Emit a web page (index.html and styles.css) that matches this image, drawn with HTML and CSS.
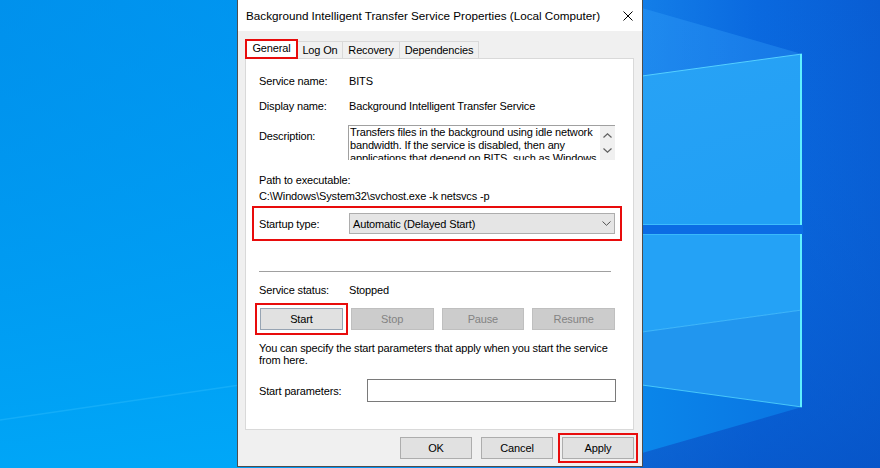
FILE: index.html
```html
<!DOCTYPE html>
<html lang="en">
<head>
<meta charset="utf-8">
<title>BITS Properties</title>
<link rel="stylesheet" href="styles.css">
</head>
<body>
<div class="desktop">
  <svg class="wallpaper" width="880" height="468" viewBox="0 0 880 468">
    <defs>
      <linearGradient id="bg" x1="0" y1="0" x2="1" y2="0">
        <stop offset="0" stop-color="#0093ed"/>
        <stop offset="0.27" stop-color="#009bf3"/>
        <stop offset="0.73" stop-color="#137ee8"/>
        <stop offset="0.86" stop-color="#0a69df"/>
        <stop offset="1" stop-color="#095dd3"/>
      </linearGradient>
      <linearGradient id="lv" x1="0" y1="0" x2="0" y2="1">
        <stop offset="0" stop-color="#008fec" stop-opacity="0.5"/>
        <stop offset="1" stop-color="#00aaf9" stop-opacity="0.8"/>
      </linearGradient>
      <linearGradient id="rv" x1="0" y1="0" x2="0" y2="1">
        <stop offset="0" stop-color="#0a70e4" stop-opacity="0"/>
        <stop offset="1" stop-color="#0650c2" stop-opacity="0.6"/>
      </linearGradient>
      <linearGradient id="pane" x1="0" y1="0" x2="0.3" y2="1">
        <stop offset="0" stop-color="#28a2f5"/>
        <stop offset="1" stop-color="#21a0f5"/>
      </linearGradient>
      <linearGradient id="cone" x1="0" y1="0" x2="1" y2="0">
        <stop offset="0" stop-color="#0a86ea"/>
        <stop offset="1" stop-color="#0a74e2"/>
      </linearGradient>
    </defs>
    <rect width="880" height="468" fill="url(#bg)"/>
    <rect width="240" height="468" fill="url(#lv)"/>
    <rect x="640" width="240" height="468" fill="url(#rv)"/>
    <path d="M0 420 L240 385" stroke="#40c8ff" stroke-opacity="0.3" stroke-width="1.5" fill="none"/>
    <polygon points="642,8 802,54 642,76" fill="#3aa8ff" opacity="0.3"/>
    <polygon points="642,76 802,54 802,225 642,225" fill="url(#pane)"/>
    <rect x="642" y="225" width="161" height="9" fill="#0b6ce4"/>
    <polygon points="642,385 802,407 642,453" fill="url(#cone)"/>
    <polygon points="642,234 802,234 802,310 642,332" fill="#24a2f6"/>
    <polygon points="642,332 802,310 802,407 642,385" fill="#2196ef"/>
    <line x1="642" y1="76" x2="802" y2="54" stroke="#55d0ff" stroke-width="1"/>
    <line x1="642" y1="224.5" x2="802" y2="224.5" stroke="#48c8ff" stroke-width="1" stroke-opacity="0.7"/>
    <line x1="642" y1="234.5" x2="802" y2="234.5" stroke="#48c8ff" stroke-width="1" stroke-opacity="0.6"/>
    <line x1="642" y1="332" x2="802" y2="310" stroke="#50c8ff" stroke-opacity="0.7" stroke-width="1"/>
    <line x1="642" y1="385" x2="802" y2="407" stroke="#55d8ff" stroke-opacity="0.8" stroke-width="1"/>
    <line x1="801" y1="54" x2="801" y2="225" stroke="#5ff0ff" stroke-width="2"/>
    <line x1="801" y1="234" x2="801" y2="407" stroke="#5ff0ff" stroke-width="2"/>
  </svg>

  <div class="dialog">
    <div class="titlebar">
      <span class="title">Background Intelligent Transfer Service Properties (Local Computer)</span>
      <svg class="close" width="10" height="10" viewBox="0 0 10 10"><path d="M0.5 0.5 L9.5 9.5 M9.5 0.5 L0.5 9.5" stroke="#000" stroke-width="1" fill="none"/></svg>
    </div>

    <div class="tabs">
      <div class="tab tab-sel tab-gen mark">General</div>
      <div class="tab tab-log">Log On</div>
      <div class="tab tab-rec">Recovery</div>
      <div class="tab tab-dep">Dependencies</div>
    </div>

    <div class="panel">
      <div class="row r-name"><span class="lbl">Service name:</span><span>BITS</span></div>
      <div class="row r-disp"><span class="lbl">Display name:</span><span>Background Intelligent Transfer Service</span></div>
      <div class="row r-desc">
        <span class="lbl lbl-desc">Description:</span>
        <div class="descbox">
          <div class="desctext">
            <div>Transfers files in the background using idle network</div>
            <div>bandwidth. If the service is disabled, then any</div>
            <div>applications that depend on BITS, such as Windows</div>
          </div>
          <div class="scroll">
            <svg width="9" height="5" viewBox="0 0 9 5"><path d="M0.5 4.5 L4.5 0.8 L8.5 4.5" stroke="#606060" stroke-width="1.2" fill="none"/></svg>
            <svg width="9" height="5" viewBox="0 0 9 5"><path d="M0.5 0.5 L4.5 4.2 L8.5 0.5" stroke="#606060" stroke-width="1.2" fill="none"/></svg>
          </div>
        </div>
      </div>
      <div class="row r-pathlbl">Path to executable:</div>
      <div class="row r-path">C:\Windows\System32\svchost.exe -k netsvcs -p</div>
      <div class="row r-startup mark">
        <span class="lbl">Startup type:</span>
        <div class="combo">
          <span>Automatic (Delayed Start)</span>
          <svg width="9" height="5" viewBox="0 0 9 5"><path d="M0.5 0.5 L4.5 4.3 L8.5 0.5" stroke="#505050" stroke-width="1" fill="none"/></svg>
        </div>
      </div>
      <div class="sep"></div>
      <div class="row r-status"><span class="lbl">Service status:</span><span>Stopped</span></div>
      <div class="row r-btns">
        <div class="btn btn-focus mark-btn">Start</div>
        <div class="btn btn-dis">Stop</div>
        <div class="btn btn-dis">Pause</div>
        <div class="btn btn-dis">Resume</div>
      </div>
      <div class="r-hint">You can specify the start parameters that apply when you start the service<br>from here.</div>
      <div class="row r-params">
        <span class="lbl lbl-params">Start parameters:</span>
        <div class="input"></div>
      </div>
    </div>

    <div class="footer">
      <div class="btn fbtn">OK</div>
      <div class="btn fbtn">Cancel</div>
      <div class="btn fbtn mark-apply">Apply</div>
    </div>
  </div>
</div>
</body>
</html>
```

FILE: styles.css
```css
html, body {
  margin: 0;
  padding: 0;
  width: 880px;
  height: 468px;
  overflow: hidden;
}

body {
  font-family: "Liberation Sans", Arial, sans-serif;
  font-size: 11px;
  letter-spacing: -0.15px;
  color: #000;
}

.desktop {
  position: relative;
  width: 880px;
  height: 468px;
  overflow: hidden;
  background: #0a7fe6;
}

.wallpaper {
  position: absolute;
  left: 0;
  top: 0;
  display: block;
}

.dialog {
  position: absolute;
  left: 237px;
  top: -1px;
  width: 404px;
  height: 466px;
  border: 1px solid #4d4d4d;
  background: #f0f0f0;
  display: flex;
  flex-direction: column;
}

.titlebar {
  height: 31px;
  flex: none;
  background: #fff;
  display: flex;
  align-items: center;
  justify-content: space-between;
  padding: 0 9px 0 8px;
}

.title {
  font-size: 11.7px;
  letter-spacing: 0;
  white-space: nowrap;
}

.close {
  display: block;
}

.tabs {
  display: flex;
  align-items: flex-end;
  height: 20px;
  margin: 8px 0 0 7px;
  position: relative;
  z-index: 2;
}

.tab {
  box-sizing: border-box;
  height: 17px;
  margin-bottom: 1px;
  border: 1px solid #d9d9d9;
  border-bottom: none;
  background: #f0f0f0;
  text-align: center;
  line-height: 16px;
  white-space: nowrap;
}

.tab + .tab {
  margin-left: -1px;
}

.tab-sel {
  height: 20px;
  margin-bottom: 0;
  background: #fff;
  line-height: 17px;
  position: relative;
  z-index: 2;
}

.tab-gen { width: 53px; }
.tab-log { width: 46px; }
.tab-rec { width: 58px; }
.tab-dep { width: 80px; }

.mark {
  outline: 2px solid #e80c0c;
}

.tab-gen.mark {
  outline-offset: -2px;
}

.panel {
  box-sizing: border-box;
  height: 372px;
  margin: -1px 8px 0 7px;
  border: 1px solid #d9d9d9;
  background: #fff;
  padding: 0 17px 0 13px;
  display: flex;
  flex-direction: column;
  position: relative;
  z-index: 1;
}

.row {
  display: flex;
  align-items: flex-start;
  line-height: 14px;
  white-space: nowrap;
}

.lbl {
  width: 90px;
  flex: none;
}

.r-name { margin-top: 15px; }
.r-disp { margin-top: 11px; }

.r-desc { margin-top: 12px; }
.lbl-desc { padding-top: 4px; width: 89px; }

.descbox {
  box-sizing: border-box;
  width: 267px;
  height: 35px;
  border-top: 1px solid #a0a0a0;
  border-left: 1px solid #a0a0a0;
  display: flex;
  overflow: hidden;
}

.desctext {
  flex: 1;
  padding-left: 1px;
  line-height: 13px;
  overflow: hidden;
}

.scroll {
  width: 15px;
  flex: none;
  background: #f0f0f0;
  display: flex;
  flex-direction: column;
  align-items: center;
  padding-top: 7px;
  gap: 10px;
}

.scroll svg { display: block; }

.r-pathlbl { margin-top: 13px; }
.r-path { margin-top: 2px; }

.r-startup {
  margin-top: 10px;
  align-items: center;
  margin-right: 1px;
  outline-offset: 5px;
}

.combo {
  box-sizing: border-box;
  flex: 1;
  height: 21px;
  border: 1px solid #adadad;
  background: #e5e5e5;
  display: flex;
  align-items: center;
  justify-content: space-between;
  padding: 0 3px 0 3px;
}

.combo svg { display: block; }

.sep {
  margin-top: 37px;
  margin-right: 5px;
  height: 0;
  border-top: 1px solid #a0a0a0;
}

.r-status { margin-top: 11px; }

.r-btns {
  margin: 11px 1px 0 1px;
  gap: 8px;
}

.btn {
  box-sizing: border-box;
  height: 22px;
  border: 1px solid #adadad;
  background: #e1e1e1;
  display: flex;
  align-items: center;
  justify-content: center;
  white-space: nowrap;
}

.r-btns .btn { flex: 1; }

.btn-focus {
  border-color: #97a4b3;
}

.btn-dis {
  background: #cccccc;
  border-color: #bfbfbf;
  color: #838383;
}

.mark-btn {
  outline: 2px solid #e80c0c;
  outline-offset: 3px;
}

.r-hint {
  margin-top: 12px;
  line-height: 12px;
  white-space: nowrap;
}

.r-params {
  margin-top: 13px;
  align-items: center;
}

.lbl-params { width: 108px; }

.input {
  box-sizing: border-box;
  width: 249px;
  height: 23px;
  border: 1px solid #7a7a7a;
  background: #fff;
}

.footer {
  display: flex;
  justify-content: flex-end;
  gap: 9px;
  margin-top: 7px;
  padding-right: 8px;
}

.fbtn {
  width: 72px;
}

.mark-apply {
  outline: 2px solid #e80c0c;
  outline-offset: 2px;
}
```
